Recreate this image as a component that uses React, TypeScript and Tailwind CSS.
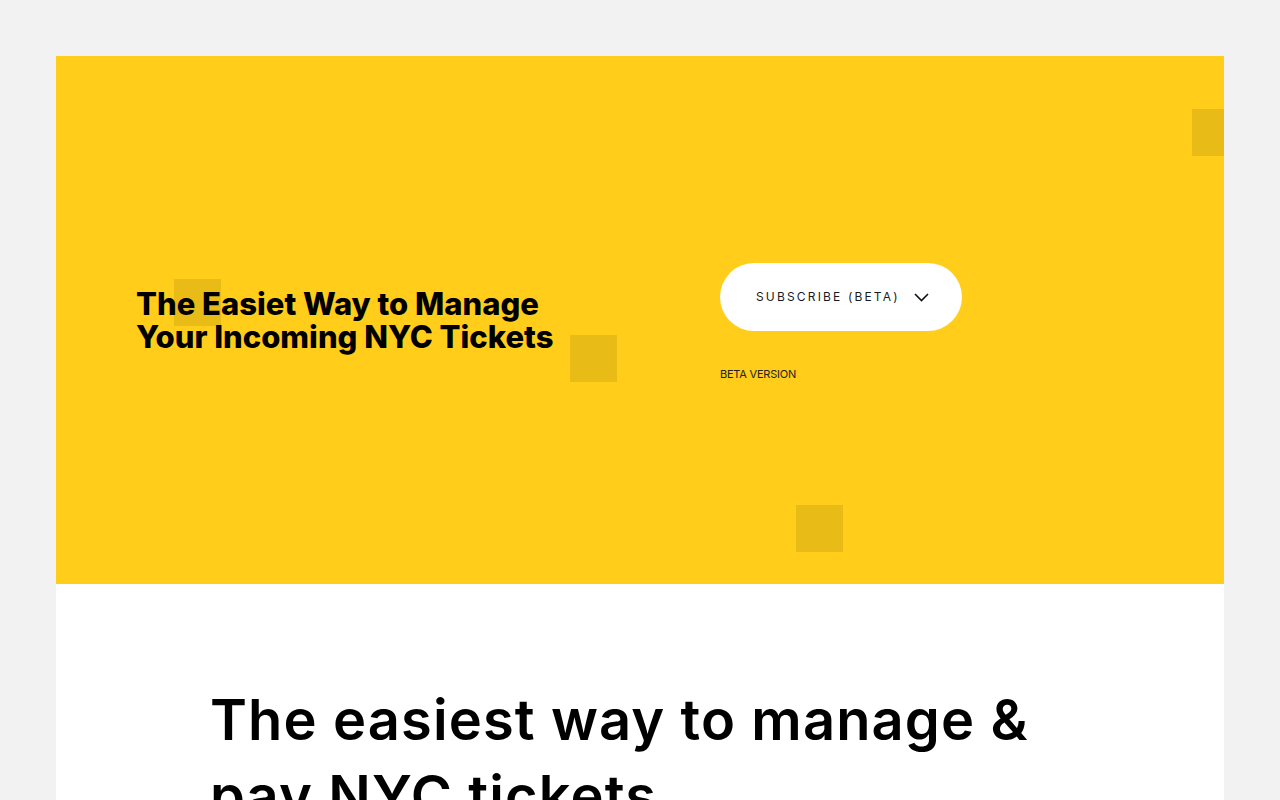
export default function App() {
  return (
    <div className="min-h-screen bg-[#f2f2f2] px-14 pt-14">
      <div className="overflow-hidden">
        {/* Hero */}
        <section className="relative h-[528px] bg-[#ffcd1a] overflow-hidden flex items-center">
          {/* decorative squares */}
          <div className="absolute left-[118px] top-[223px] w-[47px] h-[47px] bg-[#e9bb17]" />
          <div className="absolute left-[514px] top-[279px] w-[47px] h-[47px] bg-[#e9bb17]" />
          <div className="absolute left-[740px] top-[449px] w-[47px] h-[47px] bg-[#e9bb17]" />
          <div className="absolute left-[1136px] top-[53px] w-[47px] h-[47px] bg-[#e9bb17]" />

          <div className="relative w-[664px] shrink-0 pl-20">
            <h1 className="font-['Inter',sans-serif] font-extrabold text-[31px] leading-[33px] text-black">
              The Easiet Way to Manage
              <br />
              Your Incoming NYC Tickets
            </h1>
          </div>

          <div className="relative flex flex-col items-start pt-[6px]">
            <button className="flex items-center gap-[14px] h-[68px] w-[242px] rounded-full bg-white pl-9 font-['Inter',sans-serif] text-[12px] tracking-[0.18em] text-[#1a1a1a]">
              SUBSCRIBE (BETA)
              <svg width="15" height="9" viewBox="0 0 15 9" fill="none" stroke="#111" strokeWidth="1.6">
                <path d="M1 1 L7.5 7.5 L14 1" />
              </svg>
            </button>
            <p className="mt-[35px] font-['Inter',sans-serif] text-[11px] tracking-[-0.02em] text-[#222]">
              BETA VERSION
            </p>
          </div>
        </section>

        {/* White section */}
        <section className="bg-white h-[300px] pl-[154px] pt-[98px]">
          <h2 className="font-['Inter',sans-serif] font-semibold text-[56px] leading-[76px] tracking-[0.02em] text-black w-[880px]">
            The easiest way to manage &amp;
            <br />
            pay NYC tickets
          </h2>
        </section>
      </div>
    </div>
  );
}
